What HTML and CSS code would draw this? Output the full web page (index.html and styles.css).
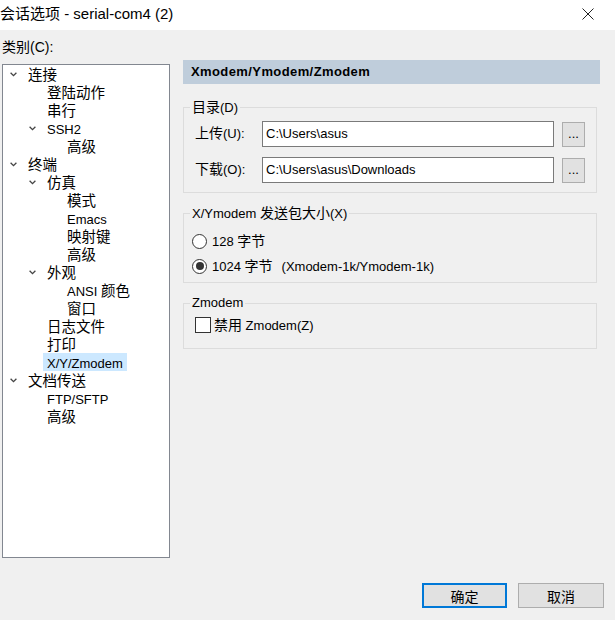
FILE: index.html
```html
<!DOCTYPE html>
<html lang="zh-CN">
<head>
  <meta charset="UTF-8">
  <meta name="viewport" content="width=device-width, initial-scale=1.0">
  <title>会话选项 - serial-com4 (2)</title>

  <link rel="stylesheet" href="styles.css">

</head>
<body>
  <div class="window">
    <div class="titlebar">
      <span class="title">会话选项 - serial-com4 (2)</span>
      <svg class="close" width="12" height="12" viewBox="0 0 12 12">
        <path d="M0.5 0.5L11.5 11.5M11.5 0.5L0.5 11.5" stroke="#222" stroke-width="1" fill="none"/>
      </svg>
    </div>

    <div class="main">
      <div class="category">
        <div class="cat-label"><span class="cn">类别</span>(C):</div>
        <div class="tree">
          <div class="row l1"><span class="tw"><svg width="7" height="5" viewBox="0 0 7 5"><path d="M0.6 0.8L3.5 3.7L6.4 0.8" fill="none" stroke="#444" stroke-width="1.3"/></svg></span><span class="txt cn">连接</span></div>
          <div class="row l2"><span class="tw"></span><span class="txt cn">登陆动作</span></div>
          <div class="row l2"><span class="tw"></span><span class="txt cn">串行</span></div>
          <div class="row l2"><span class="tw"><svg width="7" height="5" viewBox="0 0 7 5"><path d="M0.6 0.8L3.5 3.7L6.4 0.8" fill="none" stroke="#444" stroke-width="1.3"/></svg></span><span class="txt lat">SSH2</span></div>
          <div class="row l3"><span class="tw"></span><span class="txt cn">高级</span></div>
          <div class="row l1"><span class="tw"><svg width="7" height="5" viewBox="0 0 7 5"><path d="M0.6 0.8L3.5 3.7L6.4 0.8" fill="none" stroke="#444" stroke-width="1.3"/></svg></span><span class="txt cn">终端</span></div>
          <div class="row l2"><span class="tw"><svg width="7" height="5" viewBox="0 0 7 5"><path d="M0.6 0.8L3.5 3.7L6.4 0.8" fill="none" stroke="#444" stroke-width="1.3"/></svg></span><span class="txt cn">仿真</span></div>
          <div class="row l3"><span class="tw"></span><span class="txt cn">模式</span></div>
          <div class="row l3"><span class="tw"></span><span class="txt lat">Emacs</span></div>
          <div class="row l3"><span class="tw"></span><span class="txt cn">映射键</span></div>
          <div class="row l3"><span class="tw"></span><span class="txt cn">高级</span></div>
          <div class="row l2"><span class="tw"><svg width="7" height="5" viewBox="0 0 7 5"><path d="M0.6 0.8L3.5 3.7L6.4 0.8" fill="none" stroke="#444" stroke-width="1.3"/></svg></span><span class="txt cn">外观</span></div>
          <div class="row l3"><span class="tw"></span><span class="txt">ANSI <span class="cn">颜色</span></span></div>
          <div class="row l3"><span class="tw"></span><span class="txt cn">窗口</span></div>
          <div class="row l2"><span class="tw"></span><span class="txt cn">日志文件</span></div>
          <div class="row l2"><span class="tw"></span><span class="txt cn">打印</span></div>
          <div class="row l2"><span class="tw"></span><span class="txt lat selected">X/Y/Zmodem</span></div>
          <div class="row l1"><span class="tw"><svg width="7" height="5" viewBox="0 0 7 5"><path d="M0.6 0.8L3.5 3.7L6.4 0.8" fill="none" stroke="#444" stroke-width="1.3"/></svg></span><span class="txt cn">文档传送</span></div>
          <div class="row l2"><span class="tw"></span><span class="txt lat">FTP/SFTP</span></div>
          <div class="row l2"><span class="tw"></span><span class="txt cn">高级</span></div>
        </div>
      </div>

      <div class="panel">
        <div class="panel-head">Xmodem/Ymodem/Zmodem</div>

        <fieldset class="group group-dir">
          <legend><span class="cn">目录</span>(D)</legend>
          <div class="path-row">
            <label class="path-label"><span class="cn">上传</span>(U):</label>
            <input class="path" type="text" value="C:\Users\asus">
            <button class="browse">...</button>
          </div>
          <div class="path-row">
            <label class="path-label"><span class="cn">下载</span>(O):</label>
            <input class="path" type="text" value="C:\Users\asus\Downloads">
            <button class="browse">...</button>
          </div>
        </fieldset>

        <fieldset class="group group-size">
          <legend>X/Ymodem <span class="cn">发送包大小</span>(X)</legend>
          <div class="option">
            <span class="radio"></span>
            <span>128 <span class="cn">字节</span></span>
          </div>
          <div class="option">
            <span class="radio checked"><span class="dot"></span></span>
            <span>1024 <span class="cn">字节</span></span>
            <span class="note">(Xmodem-1k/Ymodem-1k)</span>
          </div>
        </fieldset>

        <fieldset class="group group-z">
          <legend>Zmodem</legend>
          <div class="check-row">
            <span class="checkbox"></span>
            <span><span class="cn">禁用</span> Zmodem(Z)</span>
          </div>
        </fieldset>
      </div>
    </div>

    <div class="footer">
      <button class="btn btn-default">确定</button>
      <button class="btn">取消</button>
    </div>
  </div>
</body>
</html>
```

FILE: styles.css
```css
body {
    margin: 0;
    font-family: "Liberation Sans", "Noto Sans CJK SC", sans-serif;
    font-size: 13px;
    color: #000;
    background-color: #f0f0f0;
}

.cn {
    font-family: "Noto Sans CJK SC", sans-serif;
    font-size: 14px;
    line-height: 1;
}

.window {
    width: 615px;
    height: 620px;
    background-color: #f0f0f0;
    overflow: hidden;
}

/* title bar */
.titlebar {
    height: 30px;
    background-color: #fff;
    display: flex;
    align-items: center;
    justify-content: space-between;
}

.title {
    font-family: "Liberation Sans", "Noto Sans CJK SC", sans-serif;
    font-size: 15px;
    line-height: 20px;
    margin-top: -2px;
}

.close {
    margin-right: 21px;
    margin-top: -3px;
}

/* main area */
.main {
    display: flex;
    gap: 13px;
    padding: 8px 0 0 2px;
}

.category {
    width: 168px;
}

.cat-label {
    height: 18px;
    line-height: 18px;
    margin-bottom: 8px;
    font-size: 14px;
}

.tree {
    height: 494px;
    box-sizing: border-box;
    border: 1px solid #828790;
    background-color: #fff;
}

.row {
    display: flex;
    align-items: center;
    height: 18px;
}

.row.l1 { padding-left: 5px; }
.row.l2 { padding-left: 24px; }
.row.l3 { padding-left: 44px; }

.tw {
    width: 16px;
    display: flex;
    align-items: center;
}

.tw svg {
    margin-left: 2px;
}

.txt {
    padding: 0 4px;
    height: 18px;
    line-height: 18px;
    white-space: nowrap;
}

.txt.lat {
    box-sizing: border-box;
    padding-top: 3px;
    line-height: 16px;
}

.txt.cn,
.txt .cn {
    font-size: 14.5px;
    line-height: 18px;
}

.txt.selected {
    background-color: #cce8ff;
}

/* right panel */
.panel {
    width: 417px;
    margin-top: 22px;
}

.panel-head {
    height: 24px;
    line-height: 24px;
    padding-left: 8px;
    background-color: #bfcddb;
    font-weight: bold;
    letter-spacing: 0.4px;
    margin-bottom: 15px;
}

.group {
    margin: 0 3px 12px 0;
    border: 1px solid #dcdcdc;
    padding: 0 6px 9px 6px;
    min-width: 0;
}

.group legend {
    padding: 0 2px;
    height: 16px;
    line-height: 16px;
}

.path-row {
    display: flex;
    align-items: center;
    height: 26px;
    padding-left: 5px;
    margin-top: 10px;
}

.group-dir legend + .path-row {
    margin-top: 6px;
}

.path-label {
    width: 67px;
    line-height: 20px;
}

.path {
    width: 292px;
    height: 26px;
    box-sizing: border-box;
    border: 1px solid #7a7a7a;
    padding: 0 4px 2px 3px;
    font-family: "Liberation Sans", sans-serif;
    font-size: 13px;
    color: #000;
    background-color: #fff;
    outline: none;
}

.browse {
    width: 23px;
    height: 25px;
    margin-left: 8px;
    padding: 0;
    border: 1px solid #adadad;
    background-color: #e1e1e1;
    font-family: "Liberation Sans", sans-serif;
    font-size: 13px;
    line-height: 20px;
}

.group-size {
    padding-bottom: 6px;
}

.option {
    display: flex;
    align-items: center;
    height: 20px;
    margin-top: 5px;
    padding-left: 2px;
}

.group-size legend + .option {
    margin-top: 10px;
}

.radio {
    width: 13px;
    height: 13px;
    border: 1px solid #333;
    border-radius: 50%;
    background-color: #fff;
    margin-right: 5px;
    display: flex;
    align-items: center;
    justify-content: center;
}

.radio .dot {
    width: 8px;
    height: 8px;
    border-radius: 50%;
    background-color: #333;
}

.note {
    margin-left: 9px;
}

.group-z {
    padding-bottom: 14px;
}

.check-row {
    display: flex;
    align-items: center;
    height: 18px;
    margin-top: 5px;
    padding-left: 5px;
}

.checkbox {
    width: 14px;
    height: 14px;
    border: 1px solid #333;
    background-color: #fff;
    margin-right: 3px;
}

/* bottom buttons */
.footer {
    display: flex;
    justify-content: flex-end;
    gap: 11px;
    padding-right: 11px;
    margin-top: 25px;
}

.btn {
    width: 86px;
    height: 25px;
    padding: 0;
    border: 1px solid #adadad;
    background-color: #e1e1e1;
    font-family: "Noto Sans CJK SC", sans-serif;
    font-size: 14px;
    color: #000;
}

.btn-default {
    width: 85px;
    border: 2px solid #0078d7;
}
```
